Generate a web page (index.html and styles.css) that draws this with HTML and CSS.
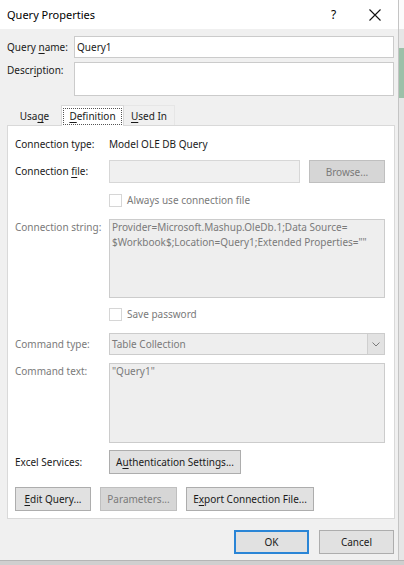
FILE: index.html
```html
<!DOCTYPE html>
<html lang="en">
<head>
  <meta charset="UTF-8">
  <meta name="viewport" content="width=device-width, initial-scale=1.0">
  <title>Query Properties</title>
  <link rel="stylesheet" href="styles.css">
</head>
<body>

  <div class="screen">
    <div class="dialog">

      <div class="titlebar">
        <span class="title">Query Properties</span>
        <span class="help">?</span>
        <span class="close">
          <svg width="12" height="12" viewBox="0 0 12 12">
            <path d="M0.5 0.5 L11.5 11.5 M11.5 0.5 L0.5 11.5" stroke="#111" stroke-width="1.1" fill="none"/>
          </svg>
        </span>
      </div>

      <div class="body">
        <div class="field">
          <label class="field-label">Query <u>n</u>ame:</label>
          <div class="input">Query1</div>
        </div>
        <div class="field field-desc">
          <label class="field-label">Descr<u>i</u>ption:</label>
          <div class="input input-tall"></div>
        </div>

        <div class="tabs">
          <div class="tab tab-usage">Usa<u>g</u>e</div>
          <div class="tab tab-active"><span class="focus"><u>D</u>efinition</span></div>
          <div class="tab tab-used"><u>U</u>sed In</div>
        </div>

        <div class="panel">
          <div class="row row-type">
            <span class="label">Connection type:</span>
            <span class="label">Model OLE DB Query</span>
          </div>

          <div class="row row-file">
            <span class="label">Connection <u>f</u>ile:</span>
            <div class="file-line">
              <div class="input input-off"></div>
              <div class="btn btn-off btn-browse">Browse...</div>
            </div>
          </div>

          <div class="row row-check">
            <span></span>
            <div class="check"><span class="box"></span>Always use connection file</div>
          </div>

          <div class="row row-string">
            <span class="label label-top off">Connection string:</span>
            <div class="area area-string">Provider=Microsoft.Mashup.OleDb.1;Data Source=<br>$Workbook$;Location=Query1;Extended Properties=""</div>
          </div>

          <div class="row row-pass">
            <span></span>
            <div class="check"><span class="box"></span>Save password</div>
          </div>

          <div class="row row-cmd">
            <span class="label off">Command type:</span>
            <div class="select">
              <span>Table Collection</span>
              <span class="arrow">
                <svg width="8" height="5" viewBox="0 0 8 5">
                  <path d="M0.5 0.5 L4 4 L7.5 0.5" stroke="#7a7a7a" stroke-width="1" fill="none"/>
                </svg>
              </span>
            </div>
          </div>

          <div class="row row-text">
            <span class="label label-top off">Command text:</span>
            <div class="area area-text">"Query1"</div>
          </div>

          <div class="row row-excel">
            <span class="label-mid">Excel Services:</span>
            <div><div class="btn btn-auth">A<u>u</u>thentication Settings...</div></div>
          </div>

          <div class="actions">
            <div class="btn btn-edit"><u>E</u>dit Query...</div>
            <div class="btn btn-off btn-params">Parameters...</div>
            <div class="btn btn-export">E<u>x</u>port Connection File...</div>
          </div>
        </div>

        <div class="footer">
          <div class="btn btn-ok">OK</div>
          <div class="btn btn-cancel">Cancel</div>
        </div>
      </div>
    </div>

    <div class="edge">
      <div class="edge-top"></div>
      <div class="edge-gap"></div>
      <div class="edge-green"></div>
    </div>
  </div>
  <div class="sheet"></div>

</body>
</html>
```

FILE: styles.css
```css
* {
  box-sizing: border-box;
}
body {
  margin: 0;
  background: #d8d8d8;
  font-family: "Segoe UI", "Noto Sans", sans-serif;
  font-size: 10px;
  line-height: 16px;
  color: #1a1a1a;
}
u {
  text-decoration-thickness: 1px;
  text-underline-offset: 2px;
}

.screen {
  display: flex;
  height: 560px;
}
.dialog {
  width: 399px;
  display: flex;
  flex-direction: column;
  background: #f0f0f0;
  border-right: 1px solid #c4c4c4;
  white-space: nowrap;
}

/* title bar */
.titlebar {
  height: 29px;
  background: #fff;
  display: flex;
  align-items: center;
  padding-left: 7px;
  font-size: 11px;
  color: #000;
}
.title {
  flex: 1;
}
.help {
  width: 20px;
  font-size: 12px;
  margin-right: 18px;
}
.close {
  width: 29px;
  display: flex;
  align-items: center;
}

.body {
  flex: 1;
  padding: 7px 4px 0 7px;
}

/* name / description */
.field {
  display: flex;
  margin-bottom: 4px;
}
.field-label {
  width: 67px;
  padding-top: 3px;
}
.field-desc .field-label {
  padding-top: 0;
}
.input {
  flex: 1;
  height: 22px;
  background: #fff;
  border: 1px solid #cbcbcb;
  padding: 2px 2px;
}
.input-tall {
  height: 34px;
}

/* tabs */
.tabs {
  display: flex;
  align-items: flex-end;
  margin-top: 9px;
  height: 20px;
  padding-left: 1px;
}
.tab {
  height: 20px;
  padding-top: 2px;
  text-align: center;
  border: 1px solid #e6e6e6;
  border-bottom: none;
}
.tab-usage {
  width: 53px;
  border-color: transparent;
}
.tab-active {
  width: 63px;
  background: #fff;
  border-color: #d9d9d9;
  padding: 2px 1px 0 1px;
  margin-bottom: -1px;
  height: 21px;
}
.focus {
  display: block;
  border: 1px dotted #555;
  height: 17px;
  line-height: 15px;
}
.tab-used {
  width: 51px;
  border-left: none;
}

/* definition panel */
.panel {
  width: 388px;
  height: 394px;
  background: #fff;
  border: 1px solid #d9d9d9;
  padding: 7px 9px 0 7px;
  display: flex;
  flex-direction: column;
}
.row {
  display: grid;
  grid-template-columns: 94px 1fr;
}
.label {
  padding-top: 3px;
}
.label-top {
  padding-top: 0;
}
.label-mid {
  align-self: center;
}
.off,
.check,
.area,
.select,
.btn-off {
  color: #7a7a7a;
}
.row-file {
  margin-top: 8px;
}
.file-line {
  display: flex;
  gap: 9px;
}
.input-off {
  height: 23px;
  background: #f0f0f0;
  border-color: #d7d7d7;
}
.row-check {
  margin-top: 10px;
}
.check {
  display: flex;
  align-items: center;
  height: 14px;
}
.box {
  width: 13px;
  height: 13px;
  border: 1px solid #d6d6d6;
  background: #fff;
  margin-right: 5px;
}
.row-string {
  margin-top: 12px;
}
.area {
  background: #eeeeee;
  border: 1px solid #cccccc;
  padding: 0 2px;
  line-height: 15px;
}
.area-string {
  height: 79px;
}
.row-pass {
  margin-top: 9px;
}
.row-cmd {
  margin-top: 12px;
}
.select {
  height: 22px;
  background: #eeeeee;
  border: 1px solid #cccccc;
  display: flex;
  align-items: center;
  justify-content: space-between;
  padding-left: 2px;
}
.arrow {
  width: 17px;
  height: 20px;
  background: #e2e2e2;
  border-left: 1px solid #cfcfcf;
  display: flex;
  align-items: center;
  justify-content: center;
}
.row-text {
  margin-top: 8px;
}
.area-text {
  height: 80px;
}
.row-excel {
  margin-top: 7px;
}

/* buttons */
.btn {
  height: 24px;
  display: flex;
  align-items: center;
  justify-content: center;
  background: #e1e1e1;
  border: 1px solid #adadad;
}
.btn-off {
  background: #cccccc;
  border-color: #bfbfbf;
}
.btn-browse {
  width: 76px;
  height: 23px;
  background: #d6d6d6;
}
.btn-auth {
  width: 132px;
}
.actions {
  display: flex;
  gap: 9px;
  margin-top: 13px;
}
.btn-edit {
  width: 76px;
}
.btn-params {
  width: 77px;
  background: #d6d6d6;
}
.btn-export {
  width: 128px;
}

.footer {
  display: flex;
  justify-content: flex-end;
  gap: 10px;
  margin-top: 11px;
}
.btn-ok,
.btn-cancel {
  width: 75px;
  height: 24px;
}
.btn-ok {
  border: 2px solid #2a85d6;
}

/* window edge on the right, sheet below */
.edge {
  flex: 1;
  display: flex;
  flex-direction: column;
  background: #e6e6e6;
}
.edge-top {
  height: 29px;
  background: #fbfbfb;
}
.edge-gap {
  height: 19px;
}
.edge-green {
  height: 50px;
  background: #9cc0a8;
}
.sheet {
  height: 5px;
  background: #cfcfcf;
  border-top: 1px solid #b5b5b5;
}
```
